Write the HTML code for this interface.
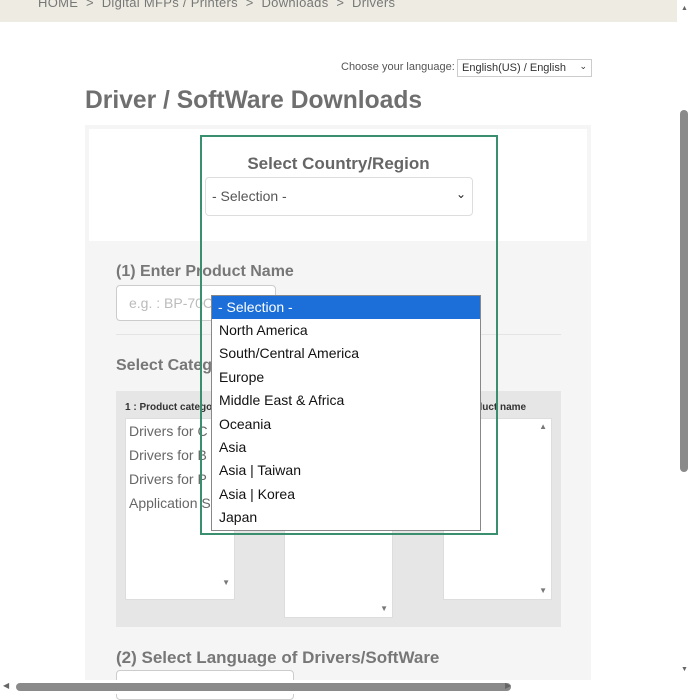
<!DOCTYPE html>
<html><head><style>
*{margin:0;padding:0;box-sizing:border-box}
body{width:690px;height:694px;overflow:hidden;background:#fff;font-family:"Liberation Sans",sans-serif;position:relative;color:#666}
.a{position:absolute}
.cond{font-family:"Liberation Sans Narrow","Liberation Sans",sans-serif}
</style></head><body>
<div class="a" style="left:0;top:0;width:677px;height:22px;background:#eeece2"></div>
<div class="a cond" style="left:38px;top:-5px;font-size:13px;color:#777;letter-spacing:0.3px">HOME &nbsp;&gt;&nbsp; Digital MFPs / Printers &nbsp;&gt;&nbsp; Downloads &nbsp;&gt;&nbsp; Drivers</div>
<div class="a cond" style="left:341px;top:61px;font-size:11px;color:#555">Choose your language:</div>
<div class="a cond" style="left:457px;top:59px;width:135px;height:18px;border:1px solid #ccc;font-size:11px;color:#333;padding:2px 4px;background:#fff">English(US) / English<span style="position:absolute;right:4px;top:1px;font-size:9px">&#x2304;</span></div>
<div class="a cond" style="left:85px;top:86px;font-size:25px;font-weight:bold;color:#6f6f6f;transform:scaleX(0.985);transform-origin:left">Driver / SoftWare Downloads</div>
<div class="a" style="left:85px;top:125px;width:506px;height:569px;background:#f6f5f5"></div>
<div class="a" style="left:89px;top:129px;width:498px;height:112px;background:#fff"></div>
<div class="a cond" style="left:190px;top:154px;width:297px;text-align:center;font-size:17px;font-weight:bold;color:#666">Select Country/Region</div>
<div class="a" style="left:205px;top:177px;width:268px;height:39px;border:1px solid #ddd;border-radius:4px;background:#fff;font-size:14px;color:#555;padding:10px 6px" ><span class="cond">- Selection -</span><span style="position:absolute;right:6px;top:9px;font-size:12px;color:#222">&#x2304;</span></div>
<div class="a" style="left:116px;top:263px;font-size:16px;font-weight:bold;color:#777">(1) Enter Product Name</div>
<div class="a" style="left:116px;top:285px;width:160px;height:36px;border:1px solid #ccc;border-radius:4px;background:#fff;font-size:14px;color:#bbb;padding:9px 12px">e.g. : BP-70C</div>
<div class="a" style="left:116px;top:334px;width:445px;height:1px;background:#e4e4e4"></div>
<div class="a" style="left:116px;top:357px;font-size:16px;font-weight:bold;color:#777">Select Category</div>
<div class="a" style="left:116px;top:391px;width:445px;height:236px;background:#e6e6e6"></div>
<div class="a" style="left:125px;top:402px;font-size:10px;font-weight:bold;color:#333">1 : Product category</div>
<div class="a" style="left:470px;top:402px;font-size:10px;font-weight:bold;color:#333">oduct name</div>
<div class="a" style="left:125px;top:418px;width:110px;height:182px;background:#fff;border:1px solid #ddd;font-size:14px;color:#666;padding:0 3px;line-height:24px">Drivers for C<br>Drivers for B<br>Drivers for P<br>Application S<span style="position:absolute;right:4px;bottom:4px;font-size:8px;color:#777">&#9660;</span></div>
<div class="a" style="left:284px;top:418px;width:109px;height:200px;background:#fff;border:1px solid #ddd"><span style="position:absolute;right:4px;bottom:4px;font-size:8px;color:#777">&#9660;</span></div>
<div class="a" style="left:443px;top:418px;width:109px;height:182px;background:#fff;border:1px solid #ddd"><span style="position:absolute;right:4px;top:3px;font-size:8px;color:#777">&#9650;</span><span style="position:absolute;right:4px;bottom:4px;font-size:8px;color:#777">&#9660;</span></div>
<div class="a cond" style="left:116px;top:648px;font-size:17px;font-weight:bold;color:#777">(2) Select Language of Drivers/SoftWare</div>
<div class="a" style="left:116px;top:670px;width:178px;height:30px;border:1px solid #ccc;border-radius:4px;background:#fff"></div>
<div class="a" style="left:200px;top:135px;width:298px;height:400px;border:2px solid #3a8f6e"></div>
<div class="a" style="left:211px;top:295px;width:270px;height:236px;background:#fff;border:1px solid #888;font-size:14px;color:#111">
<div style="background:#1c6fd9;color:#fff;height:23px;padding:3px 6px">- Selection -</div>
<div style="padding:0 7px;line-height:23.4px">North America<br>South/Central America<br>Europe<br>Middle East &amp; Africa<br>Oceania<br>Asia<br>Asia | Taiwan<br>Asia | Korea<br>Japan</div></div>
<div class="a" style="left:677px;top:0;width:13px;height:680px;background:#fff"></div>
<div class="a" style="left:680px;top:110px;width:8px;height:362px;background:#8a8a8a;border-radius:4px"></div>
<div class="a" style="left:681px;top:5px;font-size:7px;color:#666">&#9650;</div>
<div class="a" style="left:681px;top:666px;font-size:7px;color:#666">&#9660;</div>
<div class="a" style="left:0;top:680px;width:690px;height:14px;background:#fff"></div>
<div class="a" style="left:16px;top:683px;width:495px;height:8px;background:#8a8a8a;border-radius:4px"></div>
<div class="a" style="left:3px;top:681px;font-size:8px;color:#666">&#9664;</div>
<div class="a" style="left:505px;top:681px;font-size:8px;color:#666">&#9654;</div>
</body></html>
